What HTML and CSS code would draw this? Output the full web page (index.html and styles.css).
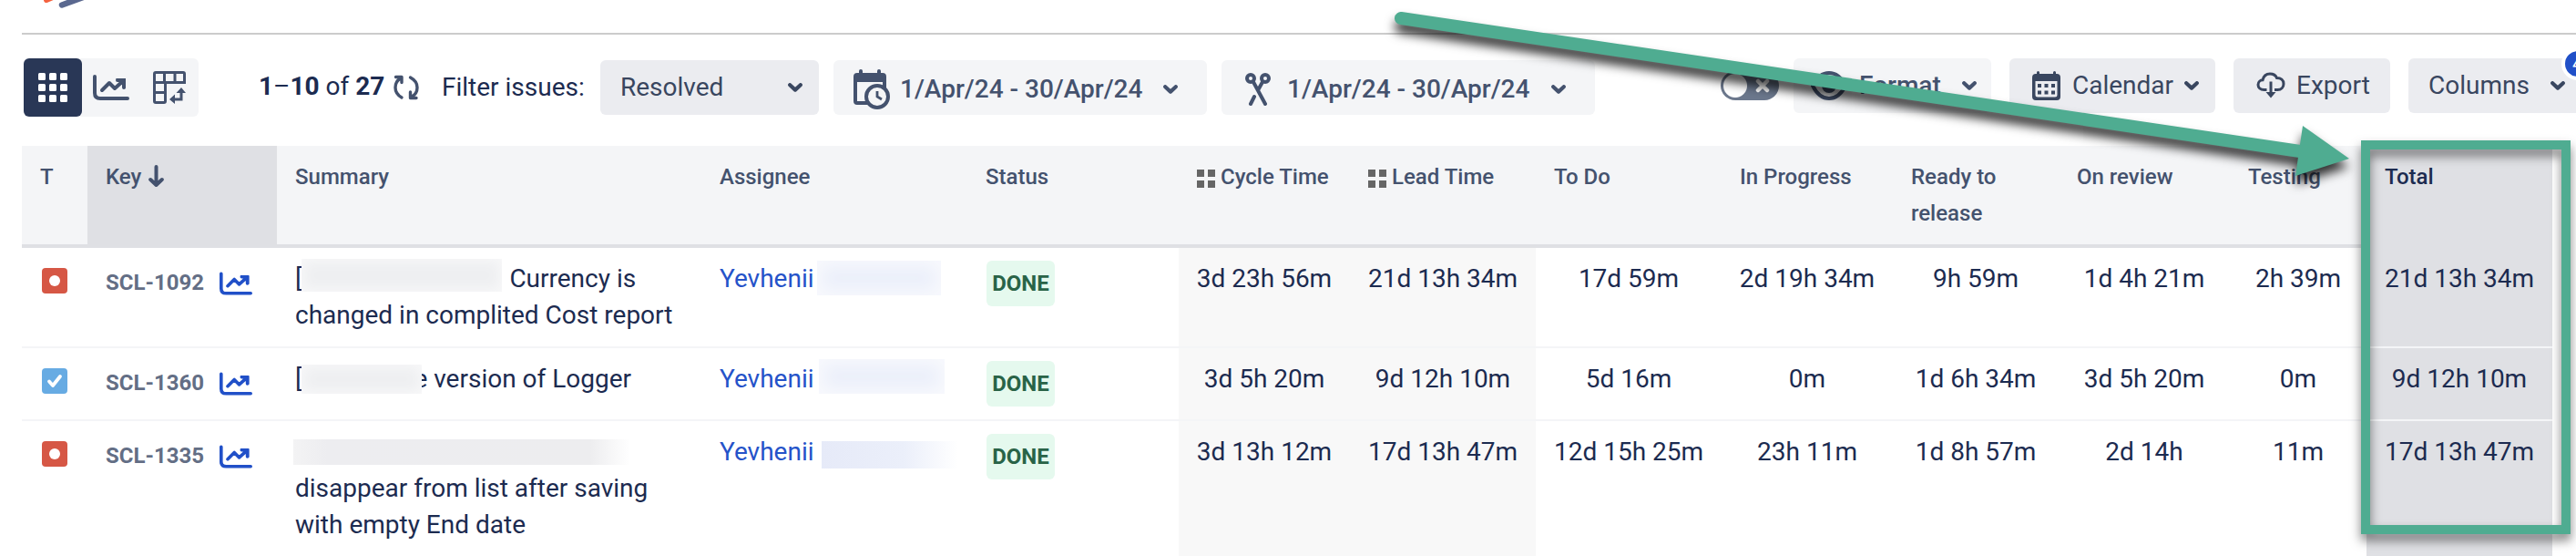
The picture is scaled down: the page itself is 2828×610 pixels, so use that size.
FILE: index.html
```html
<!DOCTYPE html>
<html lang="en">
<head>
    <meta charset="UTF-8">
    <meta name="viewport" content="width=device-width, initial-scale=1.0">
    <title>Time in Status Report</title>
    <link rel="stylesheet" href="styles.css">
</head>
<body>

    <!-- Shared icons -->
    <svg class="icon-defs" width="0" height="0">
        <symbol id="chevron" viewBox="0 0 16 10">
            <path d="M2.2 2.2 8 7.6l5.8-5.4" fill="none" stroke="currentColor" stroke-width="4.2" stroke-linecap="round" stroke-linejoin="round"/>
        </symbol>
        <symbol id="chart" viewBox="0 0 40 28">
            <path d="M2 2v18q0 6 6 6h30M10 17l8-8 6 6 10-9M27 6h7v8" fill="none" stroke="currentColor" stroke-width="4" stroke-linecap="round" stroke-linejoin="round"/>
            <path d="M25 4h11v11z" fill="currentColor"/>
        </symbol>
        <symbol id="bug" viewBox="0 0 28 28">
            <rect width="28" height="28" rx="4" fill="#d65745"/>
            <circle cx="14" cy="14" r="6" fill="#fff"/>
        </symbol>
        <symbol id="task" viewBox="0 0 28 28">
            <rect width="28" height="28" rx="4" fill="#67abe3"/>
            <path d="M8 14.5l4 4.500L20 9" fill="none" stroke="#fff" stroke-width="3.800" stroke-linecap="round" stroke-linejoin="round"/>
        </symbol>
        <symbol id="squares" viewBox="0 0 20 20">
            <path d="M0 0h8v8H0zM12 0h8v8h-8zM0 12h8v8H0zM12 12h8v8h-8z" fill="#666"/>
        </symbol>
    </svg>

    <header class="top">
        <svg class="logo" width="48" height="10" viewBox="0 0 48 10">
            <path d="M3 0l7-3" stroke="#f4623f" stroke-width="6" stroke-linecap="round"/>
            <path d="M20 5.500L46-4" stroke="#5a688f" stroke-width="6.500" stroke-linecap="round"/>
        </svg>
    </header>

    <!-- Toolbar -->
    <div class="toolbar">
        <div class="view-switch">
            <button class="view active">
                <svg width="32" height="32" viewBox="0 0 32 32" fill="#fff">
                    <rect width="8" height="8" rx="1.500"/><rect x="12" width="8" height="8" rx="1.500"/><rect x="24" width="8" height="8" rx="1.500"/>
                    <rect y="12" width="8" height="8" rx="1.500"/><rect x="12" y="12" width="8" height="8" rx="1.500"/><rect x="24" y="12" width="8" height="8" rx="1.500"/>
                    <rect y="24" width="8" height="8" rx="1.500"/><rect x="12" y="24" width="8" height="8" rx="1.500"/><rect x="24" y="24" width="8" height="8" rx="1.500"/>
                </svg>
            </button>
            <button class="view"><svg width="40" height="28"><use href="#chart"/></svg></button>
            <button class="view">
                <svg width="36" height="36" viewBox="0 0 36 36" fill="none" stroke="currentColor" stroke-width="3">
                    <path d="M3 1.500h30q1.500 0 1.500 1.500v9.500h-21v20.500q0 1.500-1.500 1.500H3q-1.500 0-1.500-1.500V3q0-1.500 1.500-1.500zM1.500 12.500h12M12.500 1.500v12M24 1.500v11M1.500 23.500h12"/>
                    <path d="M31 22v9h-8"/>
                    <path d="M25.500 24l5.500-6 5 6zM24 25.500L18 31l6 5z" fill="currentColor" stroke="none"/>
                </svg>
            </button>
        </div>

        <div class="counter"><b>1</b>–<b>10</b> of <b>27</b></div>
        <svg class="refresh" width="28" height="28" viewBox="0 0 28 28" fill="none" stroke="currentColor" stroke-width="3.400" stroke-linecap="round" stroke-linejoin="round">
            <path d="M9 25Q2 21 2 14T8 4M2.500 2.500h6.500v6"/>
            <path d="M18.500 3Q26 7 26 14t-6 10M18.500 19v6.500H25"/>
        </svg>
        <div class="filter-label">Filter issues:</div>

        <button class="btn btn-resolved"><span>Resolved</span><svg class="chevron"><use href="#chevron"/></svg></button>

        <button class="btn btn-light btn-date">
            <svg class="date-icon" width="41" height="44" viewBox="0 0 41 44">
                <path d="M6 4v-2q0-2 2-2t2 2v2h16v-2q0-2 2-2t2 2v2h2q4 0 4 4v12h-4v-6H4v21h12v4H4q-4 0-4-4V8q0-4 4-4z" fill="currentColor"/>
                <circle cx="26" cy="30" r="12" fill="#f4f5f7" stroke="currentColor" stroke-width="4"/>
                <path d="M26 24v6l5 3" fill="none" stroke="currentColor" stroke-width="2.800"/>
            </svg>
            <span>1/Apr/24 - 30/Apr/24</span>
            <svg class="chevron"><use href="#chevron"/></svg>
        </button>

        <button class="btn btn-light btn-scissors">
            <svg class="scissors" width="28" height="36" viewBox="0 0 28 36" fill="none" stroke="currentColor" stroke-width="4" stroke-linecap="round">
                <circle cx="6" cy="6" r="4"/><circle cx="22" cy="6" r="4"/>
                <path d="M9 10l13 24M19 10l-5 9M10 26l-4 8"/>
            </svg>
            <span>1/Apr/24 - 30/Apr/24</span>
            <svg class="chevron"><use href="#chevron"/></svg>
        </button>

        <div class="actions">
            <div class="toggle">
                <svg width="16" height="16" viewBox="0 0 16 16"><path d="M3 3l10 10M13 3L3 13" stroke="#fff" stroke-width="4.500" stroke-linecap="round"/></svg>
            </div>
            <button class="btn btn-light btn-format">
                <svg width="40" height="32" viewBox="0 0 40 32" fill="none" stroke="currentColor" stroke-width="4">
                    <path d="M2 16Q9 2 20 2t18 14Q31 30 20 30T2 16z"/>
                    <circle cx="20" cy="16" r="8" fill="currentColor" stroke="none"/>
                </svg>
                <span>Format</span>
                <svg class="chevron"><use href="#chevron"/></svg>
            </button>
            <button class="btn btn-calendar">
                <svg width="31" height="32" viewBox="0 0 31 32" fill="currentColor">
                    <path fill-rule="evenodd" d="M5 3V1.500a1.500 1.500 0 0 1 3 0V3h15V1.500a1.500 1.500 0 0 1 3 0V3h1q4 0 4 4v21q0 4-4 4H4q-4 0-4-4V7q0-4 4-4zM3.500 11v15q0 2.500 2.500 2.500h19q2.500 0 2.500-2.500V11z"/>
                    <path d="M6 14h4v4H6zM13.500 14h4v4h-4zM21 14h4v4h-4zM6 21.500h4v4H6zM13.500 21.500h4v4h-4zM21 21.500h4v4h-4z"/>
                </svg>
                <span>Calendar</span>
                <svg class="chevron"><use href="#chevron"/></svg>
            </button>
            <button class="btn btn-export">
                <svg width="32" height="30" viewBox="0 0 32 30" fill="none" stroke="currentColor" stroke-width="3">
                    <path d="M11.500 19.500H8.500C4.500 19.500 2 17 2 14s2.500-5 5-5.200C8 4.500 11 2 15 2c4 0 6.500 2 7.500 4.500 4.500 0 7.500 2.500 7.500 6.500s-2.800 6.500-6.500 6.500h-3.500"/>
                    <path d="M16 10.500V24"/>
                    <path d="M10.500 22h11L16 28.500z" fill="currentColor" stroke="none"/>
                </svg>
                <span>Export</span>
            </button>
            <button class="btn btn-columns">
                <span>Columns</span>
                <svg class="chevron"><use href="#chevron"/></svg>
                <span class="badge">4</span>
            </button>
        </div>
    </div>

    <!-- Report table -->
    <table class="report">
        <colgroup>
            <col style="width:72px"><col style="width:208px"><col style="width:466px"><col style="width:292px"><col style="width:232px">
            <col style="width:188px"><col style="width:204px"><col style="width:204px"><col style="width:188px"><col style="width:182px">
            <col style="width:188px"><col style="width:150px"><col style="width:204px">
        </colgroup>
        <thead>
            <tr>
                <th>T</th>
                <th class="sorted">Key <svg class="sort" width="17" height="25" viewBox="0 0 17 25" fill="none" stroke="currentColor" stroke-width="4" stroke-linecap="round" stroke-linejoin="round"><path d="M8.500 2v20M2.200 16l6.300 6 6.300-6"/></svg></th>
                <th>Summary</th>
                <th>Assignee</th>
                <th>Status</th>
                <th class="metric"><svg class="squares"><use href="#squares"/></svg>Cycle Time</th>
                <th class="metric"><svg class="squares"><use href="#squares"/></svg>Lead Time</th>
                <th>To Do</th>
                <th>In Progress</th>
                <th>Ready to release</th>
                <th>On review</th>
                <th>Testing</th>
                <th class="total">Total</th>
            </tr>
        </thead>
        <tbody>
            <tr>
                <td><svg class="type"><use href="#bug"/></svg></td>
                <td><div class="key">SCL-1092 <svg><use href="#chart"/></svg></div></td>
                <td>[<span class="hidden h1"></span> Currency is<br>changed in complited Cost report</td>
                <td class="assignee">Yevhenii<span class="hidden blue h2"></span></td>
                <td><span class="status">DONE</span></td>
                <td class="num shade">3d 23h 56m</td>
                <td class="num shade">21d 13h 34m</td>
                <td class="num">17d 59m</td>
                <td class="num">2d 19h 34m</td>
                <td class="num">9h 59m</td>
                <td class="num">1d 4h 21m</td>
                <td class="num">2h 39m</td>
                <td class="num total">21d 13h 34m</td>
            </tr>
            <tr>
                <td><svg class="type"><use href="#task"/></svg></td>
                <td><div class="key">SCL-1360 <svg><use href="#chart"/></svg></div></td>
                <td>[<span class="hidden h3"></span>e version of Logger</td>
                <td class="assignee">Yevhenii<span class="hidden blue h4"></span></td>
                <td><span class="status">DONE</span></td>
                <td class="num shade">3d 5h 20m</td>
                <td class="num shade">9d 12h 10m</td>
                <td class="num">5d 16m</td>
                <td class="num">0m</td>
                <td class="num">1d 6h 34m</td>
                <td class="num">3d 5h 20m</td>
                <td class="num">0m</td>
                <td class="num total">9d 12h 10m</td>
            </tr>
            <tr>
                <td><svg class="type"><use href="#bug"/></svg></td>
                <td><div class="key">SCL-1335 <svg><use href="#chart"/></svg></div></td>
                <td><span class="hidden h5"></span><br>disappear from list after saving<br>with empty End date</td>
                <td class="assignee">Yevhenii<span class="hidden blue h6"></span></td>
                <td><span class="status">DONE</span></td>
                <td class="num shade">3d 13h 12m</td>
                <td class="num shade">17d 13h 47m</td>
                <td class="num">12d 15h 25m</td>
                <td class="num">23h 11m</td>
                <td class="num">1d 8h 57m</td>
                <td class="num">2d 14h</td>
                <td class="num">11m</td>
                <td class="num total">17d 13h 47m</td>
            </tr>
        </tbody>
    </table>

    <!-- Highlight on the Total column -->
    <div class="highlight"></div>
    <svg class="arrow" width="1090" height="240" viewBox="0 0 1090 240">
        <path d="M38 20L1025 166" stroke="#4fac91" stroke-width="14" stroke-linecap="round"/>
        <path d="M1028 138L1079 174L1020 193z" fill="#4fac91"/>
    </svg>

</body>
</html>
```
FILE: styles.css
```css
/* Global */
body {
    font-family: Roboto, "Liberation Sans", sans-serif;
    margin: 0;
    width: 2828px;
    height: 610px;
    overflow: hidden;
    position: relative;
    background-color: #fff;
    color: #1c2b50;
    font-size: 28px;
    line-height: 40px;
}

.icon-defs {
    position: absolute;
}

svg {
    display: block;
    flex: none;
}

.top {
    height: 36px;
    margin-left: 24px;
    border-bottom: 2px solid #ccc;
}

.logo {
    margin-left: 24px;
}

/* Toolbar */
.toolbar {
    display: flex;
    align-items: flex-start;
    height: 96px;
    margin: 26px 0 0 26px;
    color: #44526e;
}

.toolbar > * {
    flex: none;
}

.view-switch {
    display: flex;
    background-color: #f4f5f7;
    border-radius: 6px;
}

.view {
    width: 64px;
    height: 64px;
    padding: 0;
    border: none;
    border-radius: 6px;
    background: none;
    color: #44526e;
    display: flex;
    align-items: center;
    justify-content: center;
}

.view.active {
    background-color: #293756;
}

.counter {
    margin: 11px 0 0 66px;
    width: 148px;
    color: #1c2b50;
    white-space: nowrap;
}

.counter b {
    font-weight: 700;
}

.refresh {
    margin-top: 18px;
}

.filter-label {
    margin: 12px 0 0 25px;
    width: 174px;
    color: #1c2b50;
    white-space: nowrap;
}

.btn {
    position: relative;
    box-sizing: border-box;
    flex: none;
    height: 60px;
    display: flex;
    align-items: center;
    border: none;
    border-radius: 6px;
    background-color: #ebecf0;
    color: #39465f;
    font: 400 28px/40px Roboto, "Liberation Sans", sans-serif;
    white-space: nowrap;
    padding: 0 18px 0 22px;
}

.btn-light {
    background-color: #f4f5f7;
    color: #44526e;
    font-weight: 500;
}

.chevron {
    width: 16px;
    height: 10px;
    margin-left: auto;
}

.btn-resolved {
    width: 240px;
    margin-top: 2px;
}

.btn-date,
.btn-scissors {
    width: 410px;
    margin: 2px 0 0 16px;
    padding: 3px 32px 0 22px;
}

.date-icon {
    margin-right: 10px;
}

.scissors {
    margin: 0 18px 0 4px;
}

.actions {
    display: flex;
    margin-left: 138px;
}

.toggle {
    box-sizing: border-box;
    flex: none;
    width: 64px;
    height: 32px;
    margin: 14px 16px 0 0;
    padding: 8px 10px;
    border-radius: 16px;
    background: radial-gradient(circle at 16px 16px, #fff 12.5px, #6b778c 13.5px);
    display: flex;
    justify-content: flex-end;
}

.btn-format {
    width: 217px;
    padding: 0 16px 0 19px;
}

.btn-format span {
    margin-left: 13px;
}

.btn-calendar {
    width: 226px;
    margin-left: 20px;
    padding-left: 25px;
}

.btn-calendar span {
    margin-left: 13px;
}

.btn-export {
    width: 172px;
    margin-left: 20px;
    padding-left: 25px;
}

.btn-export span {
    margin-left: 12px;
}

.btn-columns {
    width: 200px;
    margin-left: 20px;
    padding-right: 28px;
}

.badge {
    position: absolute;
    top: -12px;
    left: 168px;
    width: 36px;
    height: 28px;
    border: 4px solid #fff;
    border-radius: 18px;
    background-color: #2150c8;
    color: #fff;
    font-size: 20px;
    line-height: 28px;
    text-align: left;
    text-indent: 8px;
}

/* Report table */
.report {
    width: 2778px;
    margin-left: 24px;
    table-layout: fixed;
    border-spacing: 0;
}

.report th {
    height: 80px;
    padding: 14px 20px;
    background-color: #f4f5f7;
    border-bottom: 4px solid #dfe0e4;
    color: #44526e;
    font-size: 24px;
    font-weight: 500;
    text-align: left;
    vertical-align: top;
}

.report th.sorted {
    background-color: #dfe0e4;
}

.report th.metric {
    padding-right: 0;
    white-space: nowrap;
}

.sort {
    display: inline-block;
    vertical-align: -4px;
    margin-left: 2px;
}

.squares {
    display: inline-block;
    width: 20px;
    height: 20px;
    margin-right: 6px;
    vertical-align: -4px;
}

.report td {
    padding: 14px 20px;
    border-bottom: 2px solid #f4f5f7;
    vertical-align: top;
    white-space: nowrap;
}

.report td.num {
    padding: 14px 0;
    text-align: center;
}

.report td.shade {
    background-color: #f8f8f8;
}

.report th.total,
.report td.total {
    background-color: #dfe0e4;
    color: #1c2b50;
}

.type {
    width: 28px;
    height: 28px;
    margin: 8px 0 0 2px;
}

.key {
    display: flex;
    margin-top: 4px;
    color: #636e85;
    font-size: 24px;
    font-weight: 700;
}

.key svg {
    width: 36px;
    height: 26px;
    margin: 8px 0 0 17px;
    color: #2150c8;
}

.report td.assignee {
    color: #2553c9;
}

.status {
    display: block;
    box-sizing: border-box;
    width: 75px;
    height: 50px;
    margin-left: 1px;
    padding: 5px 0;
    border-radius: 6px;
    background-color: #e5f9ee;
    color: #296347;
    font-size: 24px;
    font-weight: 700;
    text-align: center;
}

/* Masked names */
.hidden {
    display: inline-block;
    position: relative;
    vertical-align: top;
    background-color: #eeeff1;
    box-shadow: inset 0 0 14px 3px #f8f8f9;
}

.hidden.blue {
    background-color: #ebeffa;
    box-shadow: inset 0 0 18px 6px #f8f9fd;
}

.h1 {
    width: 220px;
    height: 36px;
    margin: -2px 1px 0 0;
}

.h2 {
    width: 136px;
    height: 38px;
    margin-left: 3px;
}

.h3 {
    width: 132px;
    height: 32px;
    margin: 4px -9px 0 0;
}

.h4 {
    width: 138px;
    height: 38px;
    margin: -2px 0 0 5px;
}

.h5 {
    width: 370px;
    height: 28px;
    margin: 6px 0 0 -2px;
    background: linear-gradient(90deg, #f3f3f4, #ededf0 10%, #ededef 88%, #fff);
    box-shadow: none;
}

.hidden.h6 {
    width: 150px;
    height: 30px;
    margin: 8px 0 0 8px;
    background: linear-gradient(90deg, #e6eaf8, #ebeffa 60%, #fff);
    box-shadow: none;
}

/* Arrow and frame over the page */
.highlight {
    position: absolute;
    box-sizing: border-box;
    left: 2592px;
    top: 154px;
    width: 230px;
    height: 432px;
    border: 10px solid #4fac91;
    filter: drop-shadow(0 7px 6px rgba(0, 0, 0, 0.5));
}

.arrow {
    position: absolute;
    left: 1500px;
    top: 0;
    filter: drop-shadow(0 9px 6px rgba(0, 0, 0, 0.8));
}
```
